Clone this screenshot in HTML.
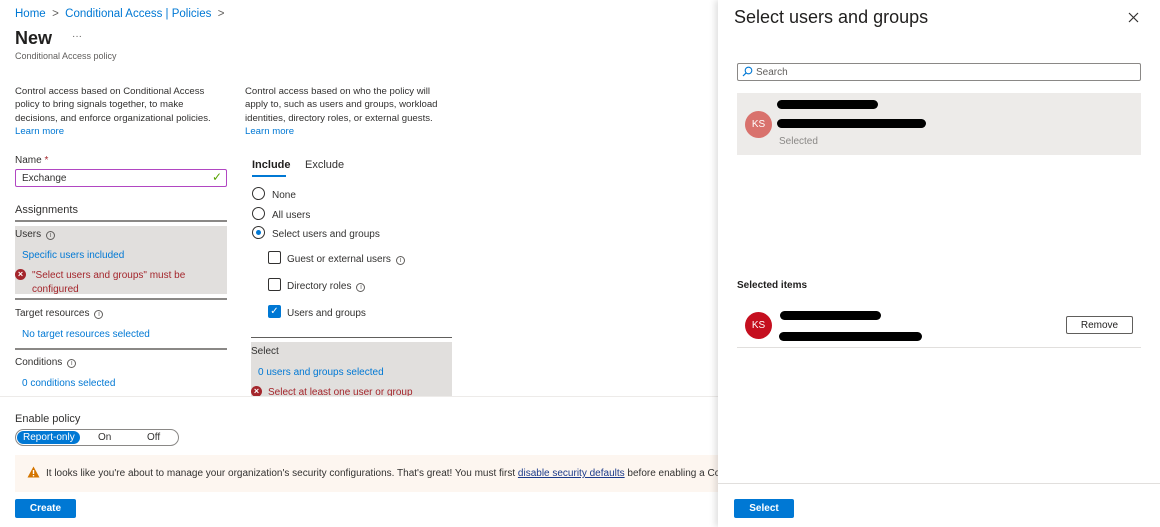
<!DOCTYPE html>
<html><head><meta charset="utf-8"><style>
*{margin:0;padding:0;box-sizing:border-box}
body{width:1160px;height:527px;overflow:hidden;background:#fff;font-family:"Liberation Sans",sans-serif;color:#323130;position:relative;font-size:10px}
.a{position:absolute;white-space:nowrap;line-height:13px}
.b{color:#0078d4}
.r{color:#a4262c}
.g{position:absolute;background:#e1dfdd}
.ln{position:absolute;height:2px;background:#8a8886}
.rad{position:absolute;width:13px;height:13px;border:1px solid #323130;border-radius:50%}
.cb{position:absolute;width:13px;height:13px;border:1px solid #323130;border-radius:2px}
.err{position:absolute;width:11px;height:11px;border-radius:50%;background:#a4262c;color:#fff;font-size:9px;line-height:11px;text-align:center;font-weight:bold}
.info{display:inline-block;width:9px;height:9px;border:1px solid #605e5c;border-radius:50%;font-size:7px;line-height:8px;text-align:center;margin-left:5px;vertical-align:0px;color:#605e5c}
.bar{position:absolute;background:#000;border-radius:5px;height:9px}
</style></head><body>
<div class="a b" style="left:15px;top:8px;font-size:11.5px">Home &nbsp;<span style="color:#605e5c">&gt;</span>&nbsp; Conditional Access | Policies &nbsp;<span style="color:#605e5c">&gt;</span></div>
<div class="a" style="left:15px;top:27px;font-size:18px;line-height:22px;font-weight:bold;color:#201f1e">New</div>
<div class="a" style="left:72px;top:30px;color:#605e5c">···</div>
<div class="a" style="left:15px;top:50px;font-size:9px;color:#605e5c">Conditional Access policy</div>
<div class="a" style="left:15px;top:85px;line-height:13.3px;font-size:9.6px">Control access based on Conditional Access<br>policy to bring signals together, to make<br>decisions, and enforce organizational policies.<br><span class="b">Learn more</span></div>
<div class="a" style="left:245px;top:85px;line-height:13.3px;font-size:9.6px">Control access based on who the policy will<br>apply to, such as users and groups, workload<br>identities, directory roles, or external guests.<br><span class="b">Learn more</span></div>
<div class="a" style="left:15px;top:154px">Name <span class="r">*</span></div>
<div style="position:absolute;left:15px;top:169px;width:212px;height:18px;border:1px solid #b146c2;border-radius:2px"></div>
<div class="a" style="left:22px;top:172px">Exchange</div>
<div class="a" style="left:212px;top:171px;color:#57a300;font-size:12px">✓</div>
<div class="a" style="left:15px;top:204px;font-size:11px">Assignments</div>
<div class="ln" style="left:15px;top:220px;width:212px"></div>
<div class="g" style="left:15px;top:226px;width:212px;height:68px"></div>
<div class="a" style="left:15px;top:228px">Users<span class="info">i</span></div>
<div class="a b" style="left:22px;top:249px">Specific users included</div>
<div class="err" style="left:15px;top:269px">×</div>
<div class="a r" style="left:32px;top:269px;line-height:14px">"Select users and groups" must be<br>configured</div>
<div class="ln" style="left:15px;top:298px;width:212px"></div>
<div class="a" style="left:15px;top:307px">Target resources<span class="info">i</span></div>
<div class="a b" style="left:22px;top:328px">No target resources selected</div>
<div class="ln" style="left:15px;top:348px;width:212px"></div>
<div class="a" style="left:15px;top:356px">Conditions<span class="info">i</span></div>
<div class="a b" style="left:22px;top:377px">0 conditions selected</div>

<div class="a" style="left:252px;top:159px;font-size:11px;font-weight:bold;color:#201f1e">Include</div>
<div style="position:absolute;left:252px;top:175px;width:34px;height:2px;background:#0078d4"></div>
<div class="a" style="left:305px;top:159px;font-size:11px">Exclude</div>
<div class="rad" style="left:252px;top:187px"></div><div class="a" style="left:272px;top:189px">None</div>
<div class="rad" style="left:252px;top:207px"></div><div class="a" style="left:272px;top:209px">All users</div>
<div class="rad" style="left:252px;top:226px"></div><div style="position:absolute;left:256px;top:230px;width:5px;height:5px;border-radius:50%;background:#0078d4"></div><div class="a" style="left:272px;top:228px">Select users and groups</div>
<div class="cb" style="left:268px;top:251px"></div><div class="a" style="left:287px;top:253px">Guest or external users<span class="info">i</span></div>
<div class="cb" style="left:268px;top:278px"></div><div class="a" style="left:287px;top:280px">Directory roles<span class="info">i</span></div>
<div class="cb" style="left:268px;top:305px;background:#0078d4;border-color:#0078d4;color:#fff;font-size:10px;line-height:11px;text-align:center">✓</div><div class="a" style="left:287px;top:307px">Users and groups</div>
<div class="ln" style="left:251px;top:337px;width:201px;height:1px;background:#605e5c"></div>
<div class="g" style="left:251px;top:342px;width:201px;height:54px"></div>
<div class="a" style="left:251px;top:345px">Select</div>
<div class="a b" style="left:258px;top:366px">0 users and groups selected</div>
<div class="err" style="left:251px;top:386px">×</div>
<div style="position:absolute;left:266px;top:386px;width:180px;height:10px;overflow:hidden"><div class="a r" style="left:2px;top:0">Select at least one user or group</div></div>

<div style="position:absolute;left:0;top:396px;width:720px;height:131px;background:#fff;border-top:1px solid #edebe9"></div>
<div class="a" style="left:15px;top:413px;font-size:11px">Enable policy</div>
<div style="position:absolute;left:15px;top:429px;width:164px;height:17px;border:1px solid #8a8886;border-radius:9px"></div>
<div style="position:absolute;left:17px;top:431px;width:63px;height:13px;background:#0078d4;border-radius:7px"></div>
<div class="a" style="left:23px;top:431px;color:#fff">Report-only</div>
<div class="a" style="left:98px;top:431px">On</div>
<div class="a" style="left:147px;top:431px">Off</div>
<div style="position:absolute;left:15px;top:455px;width:705px;height:37px;background:#fdf6f0;overflow:hidden">
<svg style="position:absolute;left:12px;top:11px" width="13" height="12" viewBox="0 0 13 12"><path d="M6.5 0.5L12.5 11.5H0.5Z" fill="#d47500"/><rect x="5.8" y="4" width="1.4" height="4" fill="#fff"/><rect x="5.8" y="9" width="1.4" height="1.4" fill="#fff"/></svg>
<div class="a" style="left:31px;top:12px">It looks like you're about to manage your organization's security configurations. That's great! You must first <span style="color:#1b3a8a;text-decoration:underline">disable security defaults</span> before enabling a Conditional Access policy.</div></div>
<div style="position:absolute;left:15px;top:499px;width:61px;height:19px;background:#0078d4;border-radius:2px;color:#fff;font-weight:bold;text-align:center;line-height:19px">Create</div>

<div style="position:absolute;left:718px;top:0;width:442px;height:527px;background:#fff;box-shadow:-3px 0 6px rgba(0,0,0,0.12)">
<div class="a" style="left:16px;top:6px;font-size:18px;line-height:22px;color:#201f1e">Select users and groups</div>
<svg style="position:absolute;left:410px;top:12px" width="11" height="11"><path d="M1 1L10 10M10 1L1 10" stroke="#323130" stroke-width="1.2"/></svg>
<div style="position:absolute;left:19px;top:63px;width:404px;height:18px;border:1px solid #8a8886;border-radius:2px"></div>
<svg style="position:absolute;left:24px;top:66px" width="11" height="11"><circle cx="6.5" cy="4.5" r="3.3" fill="none" stroke="#0078d4" stroke-width="1.1"/><path d="M4.2 6.8L1 10" stroke="#0078d4" stroke-width="1.2"/></svg>
<div class="a" style="left:38px;top:66px;color:#605e5c">Search</div>
<div style="position:absolute;left:19px;top:93px;width:404px;height:62px;background:#edebe9"></div>
<div style="position:absolute;left:27px;top:111px;width:27px;height:27px;border-radius:50%;background:#d9726d;color:#fff;text-align:center;line-height:27px;font-size:10px">KS</div>
<div class="bar" style="left:59px;top:100px;width:101px"></div>
<div class="bar" style="left:59px;top:119px;width:149px"></div>
<div class="a" style="left:61px;top:135px;color:#8a8886">Selected</div>
<div class="a" style="left:19px;top:279px;font-weight:bold;color:#201f1e">Selected items</div>
<div style="position:absolute;left:27px;top:312px;width:27px;height:27px;border-radius:50%;background:#c50f1f;color:#fff;text-align:center;line-height:27px;font-size:10px">KS</div>
<div class="bar" style="left:62px;top:311px;width:101px"></div>
<div class="bar" style="left:61px;top:332px;width:143px"></div>
<div style="position:absolute;left:348px;top:316px;width:67px;height:18px;border:1px solid #605e5c;border-radius:2px;text-align:center;line-height:18px;color:#201f1e">Remove</div>
<div style="position:absolute;left:19px;top:347px;width:404px;height:1px;background:#e1dfdd"></div>
<div style="position:absolute;left:0;top:483px;width:442px;height:1px;background:#e1dfdd"></div>
<div style="position:absolute;left:16px;top:499px;width:60px;height:19px;background:#0078d4;border-radius:2px;color:#fff;font-weight:bold;text-align:center;line-height:19px">Select</div>
</div>
</body></html>
